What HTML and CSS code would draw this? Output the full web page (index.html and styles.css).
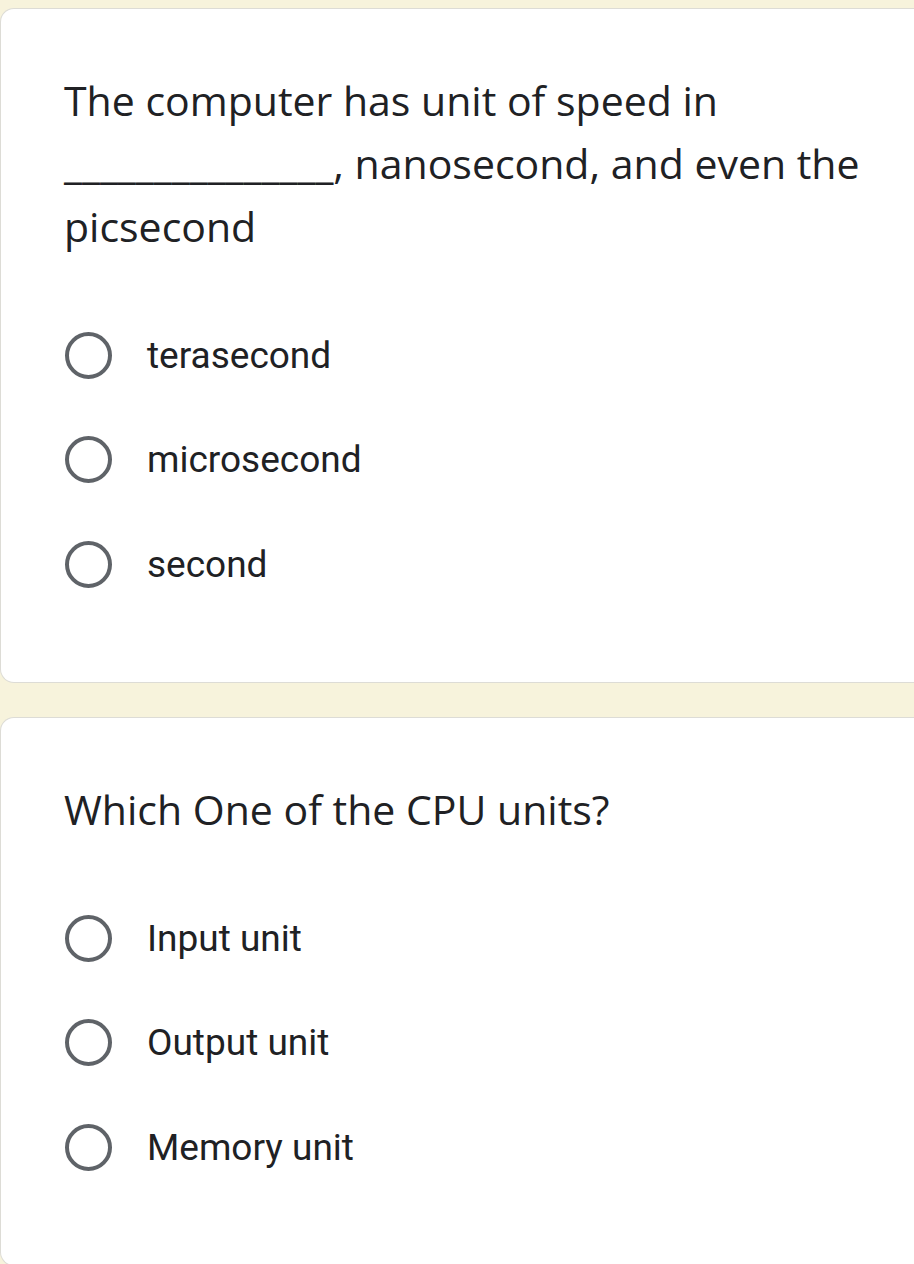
FILE: index.html
```html
<!DOCTYPE html>
<html>
<head>
<meta charset="utf-8">
<link rel="stylesheet" href="styles.css">
</head>
<body>
<div class="page">
  <section class="card">
    <div class="question">The computer has unit of speed in _______________, nanosecond, and even the picsecond</div>
    <div class="options">
      <label class="option"><span class="radio"></span><span class="label">terasecond</span></label>
      <label class="option"><span class="radio"></span><span class="label">microsecond</span></label>
      <label class="option"><span class="radio"></span><span class="label">second</span></label>
    </div>
  </section>
  <section class="card">
    <div class="question">Which One of the CPU units?</div>
    <div class="options">
      <label class="option"><span class="radio"></span><span class="label">Input unit</span></label>
      <label class="option"><span class="radio"></span><span class="label">Output unit</span></label>
      <label class="option"><span class="radio"></span><span class="label">Memory unit</span></label>
    </div>
  </section>
</div>
</body>
</html>
```
FILE: styles.css
```css
html, body {
  margin: 0;
  padding: 0;
  background: #f7f3dc;
}
.page {
  padding-top: 8px;
  display: flex;
  flex-direction: column;
  gap: 34px;
  overflow: hidden;
  height: 1264px;
  box-sizing: border-box;
}
.card {
  background: #ffffff;
  border: 1px solid #dddcd6;
  border-right: none;
  border-radius: 14px 0 0 14px;
  margin-right: -20px;
  padding: 60px 0 95px 63px;
}
.question {
  font-family: "Open Sans", sans-serif;
  font-size: 41px;
  line-height: 63px;
  color: #202124;
  width: 810px;
}
.options {
  margin-top: 74px;
  display: flex;
  flex-direction: column;
  gap: 58.5px;
}
.option {
  display: flex;
  align-items: center;
  height: 46px;
}
.radio {
  width: 39px;
  height: 39px;
  border: 4px solid #5f6368;
  border-radius: 50%;
  margin-left: 1px;
  flex: none;
}
.label {
  margin-left: 35px;
  font-family: Roboto, sans-serif;
  font-size: 37px;
  color: #202124;
}
```
